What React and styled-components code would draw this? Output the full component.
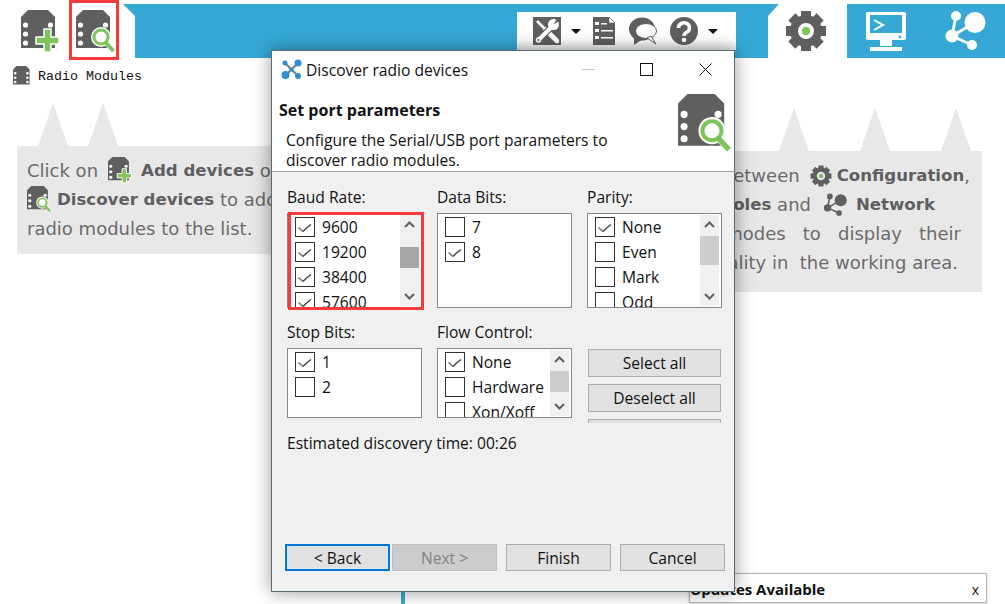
import React from 'react'
import styled, { createGlobalStyle } from 'styled-components'

const GRAY = '#5f5f60'
const GREEN = '#7fc35b'
const BLUE = '#36a8d6'
const RED = '#f53b3b'

const Global = createGlobalStyle`
  html, body { margin: 0; padding: 0; background: #fff; }
  * { box-sizing: border-box; }
`

const Page = styled.div`
  position: relative;
  width: 1005px;
  height: 604px;
  overflow: hidden;
  background: #fff;
  font-family: "Open Sans", "Noto Sans", sans-serif;
`

const Header = styled.header`
  display: flex;
  height: 58px;
  border-top: 3px solid #fff;
`

const LeftTools = styled.div`
  display: flex;
  flex: 0 0 135px;
  gap: 16px;
  padding: 7px 0 0 21px;
`

const ToolIcon = styled.div`
  position: relative;
  width: 39px;
  height: 44px;

  ${props => props.$marked && `
    &::after {
      content: '';
      position: absolute;
      left: -7px;
      right: -4px;
      top: -10px;
      bottom: -6px;
      border: 3px solid ${RED};
    }
  `}
`

const Band = styled.div`
  flex: 1;
  display: flex;
  justify-content: flex-end;
  margin: 1px 0 0 -12px;
  padding-right: 32px;
  background: ${BLUE};
  clip-path: polygon(0 0, 12px 12px, 12px 100%, 100% 100%, 100% 0);
`

const Toolbar = styled.div`
  display: flex;
  align-items: center;
  width: 219px;
  height: 38px;
  margin-top: 8px;
  padding-left: 16px;
  background: linear-gradient(#fff 75%, #e6e6e6 100%);
`

const Caret = styled.span`
  width: 0;
  height: 0;
  margin: 0 ${props => props.$after}px 0 10px;
  border-left: 5px solid transparent;
  border-right: 5px solid transparent;
  border-top: 5px solid #111;
`

const ToolGap = styled.span`
  width: ${props => props.$width}px;
`

const ModeTabs = styled.div`
  display: flex;
  flex: 0 0 237px;
  margin-top: 1px;
  background: ${BLUE};
`

const ModeTab = styled.div`
  display: flex;
  align-items: center;
  justify-content: center;
  width: ${props => props.$width}px;
  padding-right: ${props => props.$shift || 0}px;
  ${props => props.$active && `
    background: #fff;
    clip-path: polygon(11px 0, 100% 0, 100% 100%, 0 100%, 0 12px);
  `}
`

const PanelTitle = styled.div`
  display: flex;
  align-items: center;
  gap: 6px;
  height: 21px;
  margin: 8px 0 0 13px;
  font-family: "Liberation Mono", monospace;
  font-size: 13.33px;
  color: #111;
`

const Tips = styled.div`
  display: flex;
  justify-content: space-between;
  margin: 16px 23px 0 17px;
`

const Tip = styled.div`
  width: ${props => props.$width}px;
  margin-top: ${props => props.$top || 0}px;
`

const Spikes = styled.div`
  display: flex;
  gap: ${props => props.$gap}px;
  padding-left: ${props => props.$left}px;
`

const Spike = styled.div`
  width: 30px;
  height: 43px;
  background: #e8e8e8;
  clip-path: polygon(50% 0, 100% 100%, 0 100%);
`

const TipBody = styled.div`
  padding: 10px 0 ${props => props.$bottom}px 10px;
  background: #e8e8e8;
  font-family: "DejaVu Sans", sans-serif;
  font-size: 18px;
  color: #6b6b6b;
`

const TipLine = styled.div`
  display: flex;
  align-items: center;
  justify-content: ${props => (props.$end !== undefined ? 'flex-end' : 'flex-start')};
  height: 29px;
  padding-right: ${props => props.$end || 0}px;
  white-space: pre;

  b { font-size: 16.6px; font-weight: bold; color: #5f5f60; }
`

const TipIcon = styled.span`
  display: flex;
  flex: none;
  margin: 0 ${props => props.$right}px 0 ${props => props.$left}px;
`

const Dialog = styled.section`
  position: absolute;
  left: 271px;
  top: 50px;
  display: flex;
  flex-direction: column;
  width: 464px;
  height: 542px;
  border: 1px solid #5b6b74;
  background: #f0f0f0;
  box-shadow: 0 0 18px rgba(0, 0, 0, 0.4);
  font-size: 15.6px;
  color: #111;
`

const TitleBar = styled.div`
  display: flex;
  align-items: center;
  height: 35px;
  padding: 2px 17px 0 9px;
  background: #fff;
`

const TitleText = styled.span`
  margin-left: 4px;
  flex: 1;
`

const WindowControl = styled.div`
  display: flex;
  align-items: center;
  justify-content: center;
  width: ${props => props.$width}px;
`

const Intro = styled.div`
  display: flex;
  justify-content: space-between;
  height: 86px;
  padding: 8px 3px 0 7px;
  background: #fff;
  border-bottom: 1px solid #a0a0a0;
`

const IntroCopy = styled.div`
  padding-top: 4px;
`

const IntroTitle = styled.h1`
  margin: 0 0 8px;
  font-size: 16px;
  line-height: 24px;
  font-weight: bold;
`

const IntroText = styled.p`
  margin: 0 0 0 7px;
  width: 350px;
  line-height: 20px;
`

const Fields = styled.div`
  display: grid;
  grid-template-columns: repeat(3, 135px);
  grid-template-rows: 121px 101px;
  column-gap: 15px;
  row-gap: 14px;
  padding: 15px 0 0 15px;
`

const Field = styled.div`
  display: flex;
  flex-direction: column;
`

const FieldLabel = styled.div`
  height: 20px;
  margin-bottom: 6px;
  line-height: 20px;
`

const ListBox = styled.div`
  position: relative;
  display: flex;
  height: ${props => props.$height}px;
  border: 1px solid #828790;
  background: #fff;

  ${props => props.$marked && `
    &::after {
      content: '';
      position: absolute;
      left: 0;
      right: -3px;
      top: -2px;
      bottom: -3px;
      border: 3px solid ${RED};
    }
  `}
`

const Items = styled.div`
  flex: 1;
  overflow: hidden;
  padding: 1px 0 0 7px;
`

const Item = styled.div`
  display: flex;
  align-items: center;
  gap: 7px;
  height: 24px;
  margin-bottom: 1px;
`

const Box = styled.span`
  display: flex;
  flex: none;
  width: 20px;
  height: 20px;
  border: 1px solid #333;
  background: #fff;
`

const Scrollbar = styled.div`
  position: relative;
  flex: 0 0 19px;
  margin: 1px 2px 1px 0;
  background: #f0f0f0;
`

const ScrollArrow = styled.svg`
  position: absolute;
  left: 4px;
  ${props => (props.$down ? 'bottom: 6px;' : 'top: 6px;')}
`

const ScrollThumb = styled.div`
  position: absolute;
  left: 0;
  right: 0;
  top: ${props => props.$top}px;
  height: ${props => props.$height}px;
  background: ${props => (props.$hover ? '#a6a6a6' : '#cdcdcd')};
`

const SideButtons = styled.div`
  display: flex;
  flex-direction: column;
  gap: 7px;
  height: 101px;
  margin: 0 1px;
  padding-top: 27px;
  overflow: hidden;
`

const Button = styled.button`
  flex: none;
  width: ${props => props.$width || '100%'};
  height: ${props => props.$height || 28}px;
  margin-left: ${props => props.$gap || 0}px;
  padding: 0;
  border: ${props => (props.$focus ? '2px solid #0078d7' : `1px solid ${props.disabled ? '#bfbfbf' : '#adadad'}`)};
  background: ${props => (props.disabled ? '#cccccc' : '#e1e1e1')};
  color: ${props => (props.disabled ? '#838383' : '#111')};
  font: inherit;
`

const Estimate = styled.div`
  margin: 10px 0 0 15px;
  line-height: 20px;
`

const Footer = styled.div`
  display: flex;
  margin-top: auto;
  padding: 0 0 20px 13px;
`

const Connector = styled.div`
  position: absolute;
  left: 401px;
  top: 585px;
  bottom: 0;
  width: 4px;
  background: ${BLUE};
`

const Toast = styled.aside`
  position: absolute;
  left: 689px;
  top: 573px;
  display: flex;
  align-items: flex-end;
  justify-content: space-between;
  width: 298px;
  height: 30px;
  padding: 0 7px 3px 0;
  border: 1px solid #b5b5b5;
  background: #fff;
  box-shadow: 0 1px 3px rgba(0, 0, 0, 0.2);
  font-size: 15px;
  font-weight: bold;
  color: #111;
`

const ToastClose = styled.span`
  font-weight: normal;
  font-size: 14px;
`

// shared drawing of the radio module, with an optional green badge
const ModuleIcon = ({ size = 39, badge }) => (
  <svg width={size} height={size * 44 / 39} viewBox="0 0 39 44">
    <path d="M7 0H27L34 7V38H0V7Z" fill={GRAY} />
    {[15, 24, 33].map(y => (
      <g key={y} fill="#fff">
        <circle cx="4.5" cy={y} r="2.6" />
        {(y < 20 || !badge) && <circle cx="29.5" cy={y} r="2.6" />}
      </g>
    ))}
    {badge === 'add' && (
      <path d="M23 19h7v8h8v7h-8v8h-7v-8h-8v-7h8z" fill={GREEN} stroke="#fff" strokeWidth="1.5" />
    )}
    {badge === 'search' && (
      <g fill="none">
        <circle cx="25" cy="27" r="10" fill="#fff" />
        <path d="M31 33l7 8" stroke="#fff" strokeWidth="6" />
        <circle cx="25" cy="27" r="7" stroke={GREEN} strokeWidth="3" />
        <path d="M30 33l7.5 8" stroke={GREEN} strokeWidth="4" />
      </g>
    )}
  </svg>
)

const Gear = ({ size = 42 }) => (
  <svg width={size} height={size} viewBox="0 0 42 42">
    {[0, 45, 90, 135, 180, 225, 270, 315].map(a => (
      <rect key={a} x="16" y="1" width="10" height="10" fill={GRAY} transform={`rotate(${a} 21 21)`} />
    ))}
    <circle cx="21" cy="21" r="12" fill="none" stroke={GRAY} strokeWidth="8" />
    <circle cx="21" cy="21" r="4.2" fill={GREEN} />
  </svg>
)

const Network = ({ size = 42, color = '#fff' }) => (
  <svg width={size} height={size} viewBox="0 0 42 42">
    <path d="M12 6L8 26M8 26L31 12.5M8 26L28 35" stroke={color} strokeWidth="2.8" fill="none" />
    <g fill={color}>
      <circle cx="31" cy="12.5" r="10.5" />
      <circle cx="12" cy="6" r="5" />
      <circle cx="8" cy="26" r="6.5" />
      <circle cx="28" cy="35" r="5" />
    </g>
  </svg>
)

const Monitor = () => (
  <svg width="40" height="40" viewBox="0 0 40 40">
    <path d="M2 1H38A2 2 0 0 1 40 3V27A2 2 0 0 1 38 29H2A2 2 0 0 1 0 27V3A2 2 0 0 1 2 1Z" fill="#fff" />
    <rect x="4" y="4" width="32" height="18" fill={BLUE} />
    <path d="M8 9L17 14L8 19" fill="none" stroke="#fff" strokeWidth="2" />
    <circle cx="34" cy="26" r="1.3" fill={BLUE} />
    <path d="M14 29h12v6h-12zM4 36h32v4H4z" fill="#fff" />
  </svg>
)

const Tools = () => (
  <svg width="28" height="28" viewBox="0 0 28 28">
    <rect width="28" height="28" fill={GRAY} />
    <path d="M4 4L11 11" stroke="#fff" strokeWidth="2.6" />
    <path d="M12.5 12.5L24 24" stroke="#fff" strokeWidth="4.6" strokeLinecap="round" />
    <path d="M6 22.5L19 9.5" stroke={GRAY} strokeWidth="6.5" />
    <path d="M6 22.5L19 9.5" stroke="#fff" strokeWidth="4" />
    <circle cx="20.5" cy="7.5" r="5.5" fill="#fff" />
    <path d="M20.5 7.5L25 0H28V3Z" fill={GRAY} />
    <circle cx="5.5" cy="23" r="2.8" fill="#fff" />
    <circle cx="5.5" cy="23" r="1" fill={GRAY} />
  </svg>
)

const Doc = () => (
  <svg width="22" height="28" viewBox="0 0 22 28">
    <path d="M0 0H16L22 6V28H0Z" fill={GRAY} />
    <path d="M16 0L22 6H16Z" fill="#fff" stroke={GRAY} strokeWidth="0.6" />
    <path d="M2 5h4v3h-4zM2 12h4v3h-4zM2 19h4v3h-4zM8 6h6v1.5h-6zM8 13h12v1.5h-12zM8 20h12v1.5h-12z" fill="#fff" />
  </svg>
)

const Chat = () => (
  <svg width="30" height="28" viewBox="0 0 30 28">
    <ellipse cx="13" cy="12" rx="13" ry="11.5" fill={GRAY} />
    <path d="M5 18L5 28L14 22Z" fill={GRAY} />
    <ellipse cx="17" cy="14" rx="10.5" ry="7.5" fill="#fff" stroke={GRAY} strokeWidth="1" />
    <path d="M22 19L27 27L18 21Z" fill="#fff" stroke={GRAY} strokeWidth="1" />
  </svg>
)

const Help = () => (
  <svg width="28" height="28" viewBox="0 0 28 28">
    <circle cx="14" cy="14" r="14" fill={GRAY} />
    <path d="M8.5 11A5.5 5 0 1 1 17 15C14.8 16.2 14 17 14 19" fill="none" stroke="#fff" strokeWidth="3.6" />
    <circle cx="14" cy="23" r="2.3" fill="#fff" />
  </svg>
)

const Molecule = () => (
  <svg width="21" height="21" viewBox="0 0 21 21">
    <path d="M4 4L17 17M17 4L4 17" stroke="#6a7f8c" strokeWidth="2" />
    <g fill="#2f8fd0">
      <circle cx="4.5" cy="16" r="4" />
      <circle cx="17" cy="4" r="3.5" />
      <circle cx="4" cy="4" r="2.5" />
      <circle cx="17" cy="17" r="3" />
      <circle cx="10.5" cy="10.5" r="2" />
    </g>
  </svg>
)

const Check = () => (
  <svg width="18" height="18" viewBox="0 0 18 18">
    <path d="M2.5 9.5L7 13.5" stroke="#777" strokeWidth="1.6" fill="none" />
    <path d="M7 13.5L10 10.5L15 6.5" stroke="#444" strokeWidth="1.5" fill="none" />
  </svg>
)

const Arrow = ({ down }) => (
  <ScrollArrow $down={down} width="11" height="7" viewBox="0 0 11 7">
    <path d={down ? 'M1 1L5.5 5.5L10 1' : 'M1 6L5.5 1.5L10 6'} fill="none" stroke="#606060" strokeWidth="2" />
  </ScrollArrow>
)

const FieldList = ({ label, options, height, thumb, marked }) => (
  <Field>
    <FieldLabel>{label}</FieldLabel>
    <ListBox $height={height} $marked={marked}>
      <Items>
        {options.map(({ name, on }) => (
          <Item key={name}>
            <Box>{on ? <Check /> : null}</Box>
            {name}
          </Item>
        ))}
      </Items>
      {thumb && (
        <Scrollbar>
          <Arrow />
          <ScrollThumb $top={thumb.top} $height={thumb.height} $hover={thumb.hover} />
          <Arrow down />
        </Scrollbar>
      )}
    </ListBox>
  </Field>
)

const opt = (name, on = false) => ({ name, on })

export default function App() {
  return (
    <Page>
      <Global />
      <Header>
        <LeftTools>
          <ToolIcon><ModuleIcon badge="add" /></ToolIcon>
          <ToolIcon $marked><ModuleIcon badge="search" /></ToolIcon>
        </LeftTools>
        <Band>
          <Toolbar>
            <Tools />
            <Caret $after={12} />
            <Doc />
            <ToolGap $width={14} />
            <Chat />
            <ToolGap $width={11} />
            <Help />
            <Caret $after={0} />
          </Toolbar>
        </Band>
        <ModeTabs>
          <ModeTab $active $width={79} $shift={3}><Gear /></ModeTab>
          <ModeTab $width={78}><Monitor /></ModeTab>
          <ModeTab $width={80}><Network /></ModeTab>
        </ModeTabs>
      </Header>

      <PanelTitle>
        <ModuleIcon size={19} />
        Radio Modules
      </PanelTitle>

      <Tips>
        <Tip $width={300}>
          <Spikes $left={21} $gap={20}><Spike /><Spike /></Spikes>
          <TipBody $bottom={11}>
            <TipLine>Click on<TipIcon $left={10} $right={9}><ModuleIcon size={24} badge="add" /></TipIcon><b>Add devices</b> or</TipLine>
            <TipLine><TipIcon $left={0} $right={6}><ModuleIcon size={24} badge="search" /></TipIcon><b>Discover devices</b> to add</TipLine>
            <TipLine>radio modules to the list.</TipLine>
          </TipBody>
        </Tip>
        <Tip $width={292} $top={5}>
          <Spikes $left={89} $gap={51}><Spike /><Spike /><Spike /></Spikes>
          <TipBody $bottom={15}>
            <TipLine $end={12}>Switch between<TipIcon $left={10} $right={5}><Gear size={22} /></TipIcon><b>Configuration</b>,</TipLine>
            <TipLine $end={47}><b>Consoles</b> and<TipIcon $left={12} $right={9}><Network size={24} color={GRAY} /></TipIcon><b>Network</b></TipLine>
            <TipLine $end={21}>working   modes   to   display   their</TipLine>
            <TipLine $end={24}>functionality in  the working area.</TipLine>
          </TipBody>
        </Tip>
      </Tips>

      <Connector />
      <Toast>
        Updates Available
        <ToastClose>x</ToastClose>
      </Toast>

      <Dialog>
        <TitleBar>
          <Molecule />
          <TitleText>Discover radio devices</TitleText>
          <WindowControl $width={20}>
            <svg width="13" height="1"><rect width="13" height="1" fill="#c4c4c4" /></svg>
          </WindowControl>
          <WindowControl $width={96}>
            <svg width="13" height="13"><rect x="0.5" y="0.5" width="12" height="12" fill="none" stroke="#111" /></svg>
          </WindowControl>
          <WindowControl $width={23}>
            <svg width="13" height="13"><path d="M0.5 0.5L12.5 12.5M12.5 0.5L0.5 12.5" stroke="#111" /></svg>
          </WindowControl>
        </TitleBar>
        <Intro>
          <IntroCopy>
            <IntroTitle>Set port parameters</IntroTitle>
            <IntroText>Configure the Serial/USB port parameters to discover radio modules.</IntroText>
          </IntroCopy>
          <ModuleIcon size={53} badge="search" />
        </Intro>
        <Fields>
          <FieldList
            label="Baud Rate:"
            height={95}
            marked
            thumb={{ top: 32, height: 21, hover: true }}
            options={[opt('9600', true), opt('19200', true), opt('38400', true), opt('57600', true)]}
          />
          <FieldList label="Data Bits:" height={95} options={[opt('7'), opt('8', true)]} />
          <FieldList
            label="Parity:"
            height={95}
            thumb={{ top: 21, height: 29 }}
            options={[opt('None', true), opt('Even'), opt('Mark'), opt('Odd')]}
          />
          <FieldList label="Stop Bits:" height={70} options={[opt('1', true), opt('2')]} />
          <FieldList
            label="Flow Control:"
            height={70}
            thumb={{ top: 21, height: 21 }}
            options={[opt('None', true), opt('Hardware'), opt('Xon/Xoff')]}
          />
          <SideButtons>
            <Button>Select all</Button>
            <Button>Deselect all</Button>
            <Button />
          </SideButtons>
        </Fields>
        <Estimate>Estimated discovery time: 00:26</Estimate>
        <Footer>
          <Button $focus $width="105px" $height={27}>&lt; Back</Button>
          <Button disabled $gap={2} $width="105px" $height={27}>Next &gt;</Button>
          <Button $gap={9} $width="105px" $height={27}>Finish</Button>
          <Button $gap={9} $width="105px" $height={27}>Cancel</Button>
        </Footer>
      </Dialog>
    </Page>
  )
}
